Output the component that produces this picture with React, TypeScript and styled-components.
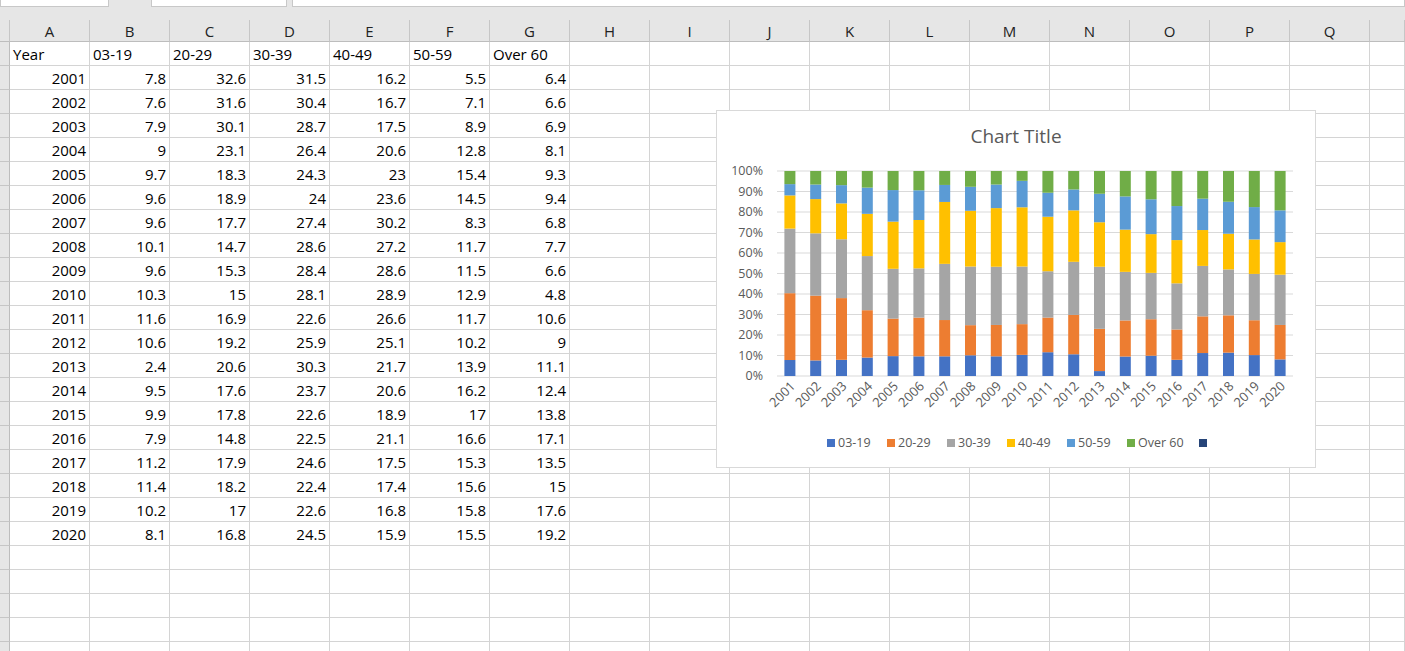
import React from 'react';
import styled, { createGlobalStyle } from 'styled-components';

const GlobalStyle = createGlobalStyle`
  body { margin: 0; font-family: "Open Sans", "Liberation Sans", sans-serif; background: #fff; overflow: hidden; }
`;

const DATA: number[][] = [
  [2001, 7.8, 32.6, 31.5, 16.2, 5.5, 6.4],
  [2002, 7.6, 31.6, 30.4, 16.7, 7.1, 6.6],
  [2003, 7.9, 30.1, 28.7, 17.5, 8.9, 6.9],
  [2004, 9, 23.1, 26.4, 20.6, 12.8, 8.1],
  [2005, 9.7, 18.3, 24.3, 23, 15.4, 9.3],
  [2006, 9.6, 18.9, 24, 23.6, 14.5, 9.4],
  [2007, 9.6, 17.7, 27.4, 30.2, 8.3, 6.8],
  [2008, 10.1, 14.7, 28.6, 27.2, 11.7, 7.7],
  [2009, 9.6, 15.3, 28.4, 28.6, 11.5, 6.6],
  [2010, 10.3, 15, 28.1, 28.9, 12.9, 4.8],
  [2011, 11.6, 16.9, 22.6, 26.6, 11.7, 10.6],
  [2012, 10.6, 19.2, 25.9, 25.1, 10.2, 9],
  [2013, 2.4, 20.6, 30.3, 21.7, 13.9, 11.1],
  [2014, 9.5, 17.6, 23.7, 20.6, 16.2, 12.4],
  [2015, 9.9, 17.8, 22.6, 18.9, 17, 13.8],
  [2016, 7.9, 14.8, 22.5, 21.1, 16.6, 17.1],
  [2017, 11.2, 17.9, 24.6, 17.5, 15.3, 13.5],
  [2018, 11.4, 18.2, 22.4, 17.4, 15.6, 15],
  [2019, 10.2, 17, 22.6, 16.8, 15.8, 17.6],
  [2020, 8.1, 16.8, 24.5, 15.9, 15.5, 19.2],
];
const HEAD = ['Year', '03-19', '20-29', '30-39', '40-49', '50-59', 'Over 60'];
const COLS = 'ABCDEFGHIJKLMNOPQ'.split('');
const SERIES = ['#4472c4', '#ed7d31', '#a5a5a5', '#ffc000', '#5b9bd5', '#70ad47'];
const TOTAL_ROWS = 27;

const Page = styled.div`
  position: relative;
  width: 1405px;
  height: 651px;
  overflow: hidden;
`;

const TabStrip = styled.div`
  height: 20px;
  background: #e6e6e6;
  display: flex;
  gap: 5px;
  align-items: flex-end;
`;

const Tab = styled.div<{ $w: number }>`
  width: ${(p) => p.$w}px;
  height: 6px;
  background: #fff;
  border: 1px solid #c8c8c8;
  border-top: none;
  align-self: flex-start;
`;

const Grid = styled.div`
  display: grid;
  grid-template-columns: 10px repeat(17, 80px) 1fr;
  grid-auto-rows: 24px;
  grid-template-rows: 22px;
`;

const ColHead = styled.div`
  background: #e6e6e6;
  border-right: 1px solid #c6c6c6;
  border-bottom: 1px solid #bdbdbd;
  font-size: 15px;
  color: #222;
  display: flex;
  align-items: center;
  justify-content: center;
`;

const RowHead = styled.div`
  background: #e6e6e6;
  border-right: 1px solid #bdbdbd;
  border-bottom: 1px solid #c6c6c6;
`;

const Cell = styled.div<{ $num?: boolean }>`
  border-right: 1px solid #d4d4d4;
  border-bottom: 1px solid #d4d4d4;
  font-size: 15px;
  color: #000;
  padding: 0 3px 1px;
  display: flex;
  align-items: flex-end;
  justify-content: ${(p) => (p.$num ? 'flex-end' : 'flex-start')};
  white-space: nowrap;
`;

const ChartBox = styled.div`
  position: absolute;
  left: 716px;
  top: 110px;
  width: 598px;
  height: 356px;
  background: #fff;
  border: 1px solid #d9d9d9;
`;

const Chart: React.FC = () => {
  const L = 60, R = 576, T = 60, B = 265;
  const step = (R - L) / 20;
  const h = B - T;
  return (
    <ChartBox>
      <svg width="598" height="356" style={{ display: 'block' }} fontFamily='"Open Sans", "Liberation Sans", sans-serif'>
        <text x="299" y="32" textAnchor="middle" fontSize="19" fill="#595959">Chart Title</text>
        {Array.from({ length: 11 }, (_, i) => {
          const y = B - (h * i) / 10;
          return (
            <g key={i}>
              <line x1={L} x2={R} y1={y} y2={y} stroke="#d9d9d9" />
              <text x={46} y={y + 4} textAnchor="end" fontSize="12.5" fill="#595959">{i * 10}%</text>
            </g>
          );
        })}
        {DATA.map((row, i) => {
          const vals = row.slice(1);
          const sum = vals.reduce((a, b) => a + b, 0);
          let acc = 0;
          const cx = L + step * (i + 0.5);
          return (
            <g key={row[0]}>
              {vals.map((v, j) => {
                const y0 = B - (acc / sum) * h;
                acc += v;
                const y1 = B - (acc / sum) * h;
                return <rect key={j} x={cx - 5.5} width={11} y={y1} height={y0 - y1} fill={SERIES[j]} />;
              })}
              <text
                transform={`translate(${cx + 6},${B + 11}) rotate(-45)`}
                textAnchor="end"
                fontSize="13"
                fill="#595959"
              >
                {row[0]}
              </text>
            </g>
          );
        })}
        {HEAD.slice(1).concat(['']).map((name, j) => {
          const xs = [110, 170, 230, 290, 350, 410, 482];
          const color = j < 6 ? SERIES[j] : '#264478';
          return (
            <g key={j}>
              <rect x={xs[j]} y={328} width={8} height={8} fill={color} />
              <text x={xs[j] + 11} y={336} fontSize="12.5" fill="#595959">{name}</text>
            </g>
          );
        })}
      </svg>
    </ChartBox>
  );
};

export default function App() {
  const cells: React.ReactNode[] = [];
  cells.push(<ColHead key="corner" />);
  COLS.forEach((c) => cells.push(<ColHead key={c}>{c}</ColHead>));
  cells.push(<ColHead key="rest" />);
  for (let r = 0; r < TOTAL_ROWS; r++) {
    cells.push(<RowHead key={`rh${r}`} />);
    for (let c = 0; c < 18; c++) {
      let content: React.ReactNode = null;
      let num = false;
      if (c < 7) {
        if (r === 0) content = HEAD[c];
        else if (r <= DATA.length) {
          content = DATA[r - 1][c];
          num = true;
        }
      }
      cells.push(
        <Cell key={`${r}-${c}`} $num={num}>
          {content}
        </Cell>
      );
    }
  }
  return (
    <Page>
      <GlobalStyle />
      <TabStrip>
        <Tab $w={108} />
        <Tab $w={30} style={{ visibility: 'hidden' }} />
        <Tab $w={135} />
        <Tab $w={1118} />
      </TabStrip>
      <Grid>{cells}</Grid>
      <Chart />
    </Page>
  );
}
